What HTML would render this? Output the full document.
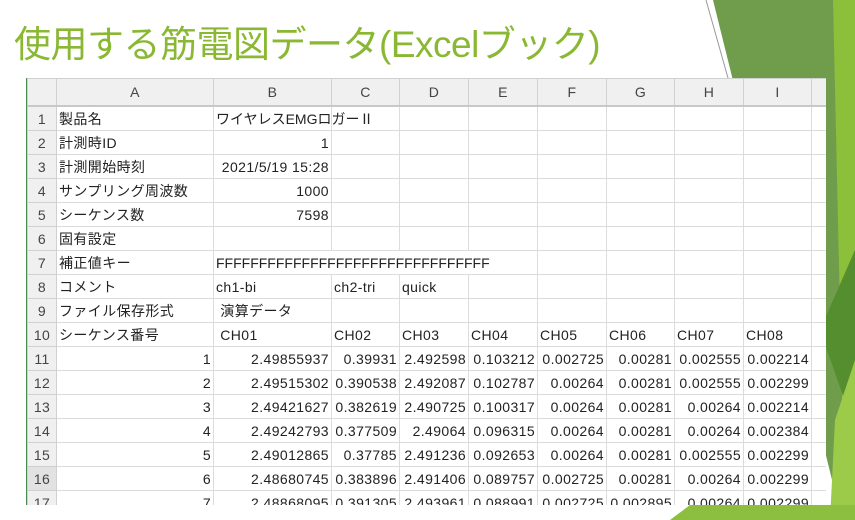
<!DOCTYPE html>
<html><head><meta charset="utf-8"><style>
body{margin:0;width:855px;height:520px;overflow:hidden;background:#fff;position:relative;font-family:"Liberation Sans","Noto Sans CJK JP",sans-serif}
.title{position:absolute;left:14px;top:22px;font-size:37px;color:#8ab833;letter-spacing:-0.5px;white-space:nowrap;line-height:46px}
.xl{position:absolute;left:26px;top:78px;width:799px;height:427px;overflow:hidden;background:#fff;border-left:1px solid #4a8a50}
table{border-collapse:collapse;table-layout:fixed;font-size:14px;letter-spacing:0.4px;color:#222;width:799px}
td{border:1px solid #dcdcdc;height:23px;padding:0 2px;white-space:nowrap;overflow:hidden}
tr.h td{height:26px;background:#f0f0f0;text-align:center;color:#444;border-color:#d0d0d0;border-bottom:2px solid #c8c8c8}
td.r{background:#f0f0f0;text-align:center;color:#444;border-color:#d0d0d0;padding:0}
.n{text-align:right}
td.ov{overflow:visible;position:relative}
</style></head><body>
<svg style="position:absolute;left:0;top:0" width="855" height="520">
<polygon points="713,0 855,0 855,520 842,520" fill="#6f9d4c"/>
<line x1="706" y1="0" x2="728" y2="78" stroke="#999" stroke-width="1"/>
<polygon points="833,0 855,0 855,520 842,400" fill="#8cbf3a"/>
<polygon points="820,330 855,250 855,430" fill="#548e2e"/>
<polygon points="835,420 855,360 855,520 830,520" fill="#9ccb4a"/>
<polygon points="670,520 690,505 855,505 855,520" fill="#8cbf3f"/>
</svg>
<div class="title">使用する筋電図データ(Excelブック)</div>
<div class="xl"><table>
<colgroup><col style="width:29px"><col style="width:157px"><col style="width:118px"><col style="width:68px"><col style="width:69px"><col style="width:69px"><col style="width:69px"><col style="width:68px"><col style="width:69px"><col style="width:68px"><col style="width:15px"></colgroup>
<tr class="h"><td></td><td>A</td><td>B</td><td>C</td><td>D</td><td>E</td><td>F</td><td>G</td><td>H</td><td>I</td><td></td></tr>
<tr><td class="r">1</td><td>製品名</td><td class="ov" style="letter-spacing:0">ワイヤレスEMGロガーⅡ</td><td></td><td></td><td></td><td></td><td></td><td></td><td></td><td></td></tr>
<tr><td class="r">2</td><td>計測時ID</td><td class="n">1</td><td></td><td></td><td></td><td></td><td></td><td></td><td></td><td></td></tr>
<tr><td class="r">3</td><td>計測開始時刻</td><td class="n">2021/5/19 15:28</td><td></td><td></td><td></td><td></td><td></td><td></td><td></td><td></td></tr>
<tr><td class="r">4</td><td>サンプリング周波数</td><td class="n">1000</td><td></td><td></td><td></td><td></td><td></td><td></td><td></td><td></td></tr>
<tr><td class="r">5</td><td>シーケンス数</td><td class="n">7598</td><td></td><td></td><td></td><td></td><td></td><td></td><td></td><td></td></tr>
<tr><td class="r">6</td><td>固有設定</td><td></td><td></td><td></td><td></td><td></td><td></td><td></td><td></td><td></td></tr>
<tr><td class="r">7</td><td>補正値キー</td><td colspan="4" class="ov" style="border-right:none;letter-spacing:0">FFFFFFFFFFFFFFFFFFFFFFFFFFFFFFFF</td><td></td><td></td><td></td><td></td><td></td></tr>
<tr><td class="r">8</td><td>コメント</td><td>ch1-bi</td><td>ch2-tri</td><td>quick</td><td></td><td></td><td></td><td></td><td></td><td></td></tr>
<tr><td class="r">9</td><td>ファイル保存形式</td><td>&nbsp;演算データ</td><td></td><td></td><td></td><td></td><td></td><td></td><td></td><td></td></tr>
<tr><td class="r">10</td><td>シーケンス番号</td><td>&nbsp;CH01</td><td>CH02</td><td>CH03</td><td>CH04</td><td>CH05</td><td>CH06</td><td>CH07</td><td>CH08</td><td></td></tr>
<tr><td class="r">11</td><td class="n">1</td><td class="n">2.49855937</td><td class="n">0.39931</td><td class="n">2.492598</td><td class="n">0.103212</td><td class="n">0.002725</td><td class="n">0.00281</td><td class="n">0.002555</td><td class="n">0.002214</td><td></td></tr>
<tr><td class="r">12</td><td class="n">2</td><td class="n">2.49515302</td><td class="n">0.390538</td><td class="n">2.492087</td><td class="n">0.102787</td><td class="n">0.00264</td><td class="n">0.00281</td><td class="n">0.002555</td><td class="n">0.002299</td><td></td></tr>
<tr><td class="r">13</td><td class="n">3</td><td class="n">2.49421627</td><td class="n">0.382619</td><td class="n">2.490725</td><td class="n">0.100317</td><td class="n">0.00264</td><td class="n">0.00281</td><td class="n">0.00264</td><td class="n">0.002214</td><td></td></tr>
<tr><td class="r">14</td><td class="n">4</td><td class="n">2.49242793</td><td class="n">0.377509</td><td class="n">2.49064</td><td class="n">0.096315</td><td class="n">0.00264</td><td class="n">0.00281</td><td class="n">0.00264</td><td class="n">0.002384</td><td></td></tr>
<tr><td class="r">15</td><td class="n">5</td><td class="n">2.49012865</td><td class="n">0.37785</td><td class="n">2.491236</td><td class="n">0.092653</td><td class="n">0.00264</td><td class="n">0.00281</td><td class="n">0.002555</td><td class="n">0.002299</td><td></td></tr>
<tr><td class="r" style="background:#e2e2e2">16</td><td class="n">6</td><td class="n">2.48680745</td><td class="n">0.383896</td><td class="n">2.491406</td><td class="n">0.089757</td><td class="n">0.002725</td><td class="n">0.00281</td><td class="n">0.00264</td><td class="n">0.002299</td><td></td></tr>
<tr><td class="r">17</td><td class="n">7</td><td class="n">2.48868095</td><td class="n">0.391305</td><td class="n">2.493961</td><td class="n">0.088991</td><td class="n">0.002725</td><td class="n">0.002895</td><td class="n">0.00264</td><td class="n">0.002299</td><td></td></tr>
</table></div>
</body></html>
